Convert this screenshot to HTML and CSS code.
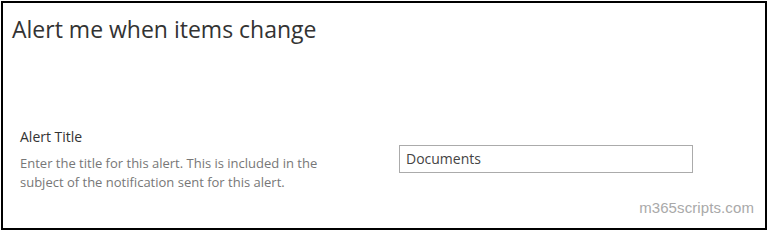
FILE: index.html
```html
<!DOCTYPE html>
<html lang="en">
<head>
<meta charset="utf-8">
<title>Alert me when items change</title>
<link rel="stylesheet" href="styles.css">
</head>
<body>
<div class="frame">
  <h1 class="title">Alert me when items change</h1>
  <div class="row">
    <div class="label-col">
      <div class="label">Alert Title</div>
      <div class="desc">Enter the title for this alert. This is included in the<br>subject of the notification sent for this alert.</div>
    </div>
    <div class="field-col">
      <div class="input">Documents</div>
    </div>
  </div>
  <div class="watermark">m365scripts.com</div>
</div>
</body>
</html>
```

FILE: styles.css
```css
html, body {
  margin: 0;
  padding: 0;
  background: #fff;
}
.frame {
  box-sizing: border-box;
  margin: 1px 0 0 1px;
  width: 766px;
  height: 229px;
  border: 2px solid #000;
  padding: 11px 11px 0 9px;
  font-family: "Open Sans", "Noto Sans", sans-serif;
}
.title {
  margin: 0;
  font-size: 23px;
  line-height: 30px;
  font-weight: 400;
  color: #333;
}
.row {
  margin-top: 84px;
  display: grid;
  grid-template-columns: 387px 294px;
}
.label-col {
  padding-left: 8px;
}
.label {
  font-size: 14px;
  line-height: 18px;
  color: #333;
}
.desc {
  margin-top: 8px;
  font-size: 13px;
  line-height: 19px;
  color: #777;
}
.field-col {
  padding-top: 17px;
}
.input {
  box-sizing: border-box;
  height: 28px;
  border: 1px solid #ababab;
  padding: 0 6px;
  font-size: 14px;
  line-height: 26px;
  color: #444;
}
.watermark {
  margin-top: 8px;
  text-align: right;
  font-family: "Liberation Sans", Arial, sans-serif;
  font-size: 15px;
  line-height: 16px;
  color: #a9a9a9;
  letter-spacing: 0.1px;
}
```
